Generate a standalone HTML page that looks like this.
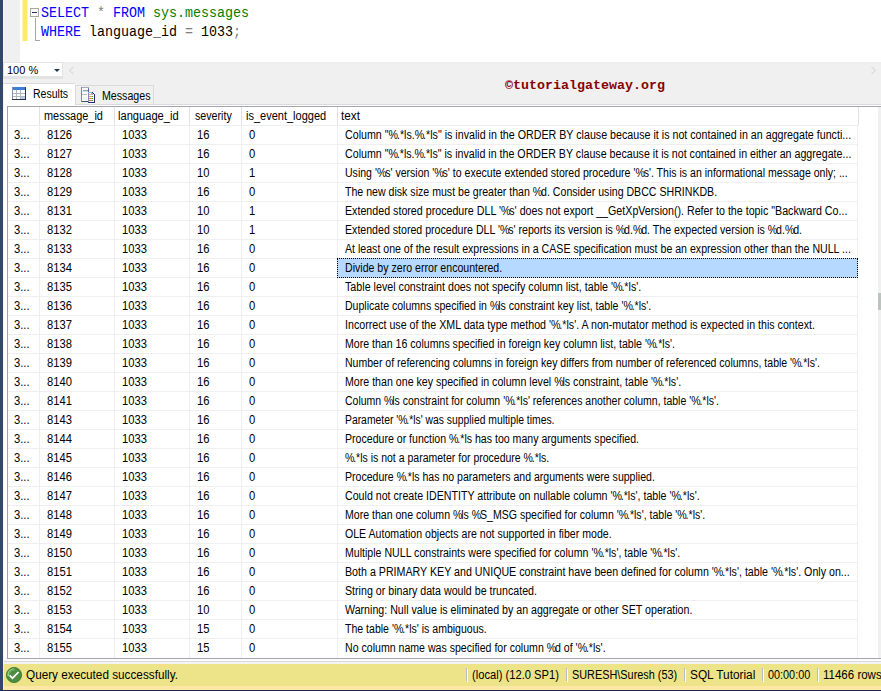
<!DOCTYPE html>
<html><head><meta charset="utf-8"><style>
html,body{margin:0;padding:0}
body{width:881px;height:691px;position:relative;overflow:hidden;background:#fff;font-family:"Liberation Sans",sans-serif}
div{position:absolute;box-sizing:border-box}
.t{white-space:pre;line-height:1;transform-origin:0 100%}
.b{line-height:0}
.p{letter-spacing:-1.3px}
</style></head><body>

<div style="left:3px;top:0;width:1px;height:62px;background:#f7f7f7"></div>
<div style="left:4px;top:0;width:16px;height:62px;background:#f0f0f0"></div>
<div style="left:22px;top:0;width:6px;height:41px;background:#fff4b0"></div>
<div style="left:23px;top:0;width:4px;height:41px;background:#ffea66"></div>
<div style="left:30px;top:8px;width:9px;height:9px;border:1px solid #a6a6a6"></div>
<div style="left:32px;top:12px;width:5px;height:1px;background:#29306a"></div>
<div style="left:35px;top:18px;width:1px;height:23px;background:#a6a6a6"></div>
<div style="left:35px;top:40px;width:5px;height:1px;background:#a6a6a6"></div>
<div class="t" style="left:41px;top:19.5px;font-family:'Liberation Mono',monospace;font-size:14px;transform:translateY(-100%) scaleX(0.9524)"><span style="color:#0000ff">SELECT</span><span style="color:#000"> </span><span style="color:#808080">*</span><span style="color:#000"> </span><span style="color:#0000ff">FROM</span><span style="color:#000"> </span><span style="color:#008000">sys.messages</span></div>
<div class="t" style="left:41px;top:38.5px;font-family:'Liberation Mono',monospace;font-size:14px;transform:translateY(-100%) scaleX(0.9524)"><span style="color:#0000ff">WHERE</span><span style="color:#000"> language_id </span><span style="color:#808080">=</span><span style="color:#000"> 1033</span><span style="color:#808080">;</span></div>
<div style="left:3px;top:62px;width:878px;height:42px;background:#f0f0f0"></div>
<div style="left:3px;top:62px;width:60px;height:17px;background:#e3e3e3"></div>
<div style="left:4px;top:63px;width:58px;height:13px;background:#fff"></div>
<div class="t" style="left:7px;top:76px;font-size:11px;color:#000;font-family:'Liberation Sans',sans-serif;font-weight:normal;transform:translateY(-100%) scaleX(1.0);">100 %</div>
<div style="left:54px;top:69px;width:0;height:0;border-left:3px solid transparent;border-right:3px solid transparent;border-top:3px solid #1f3a4c"></div>
<svg style="position:absolute;left:68px;top:66px" width="8" height="10"><polyline points="5.5,1 1.5,4.5 5.5,8" fill="none" stroke="#d0d0d0" stroke-width="1"/></svg>
<svg style="position:absolute;left:870px;top:66px" width="8" height="10"><polyline points="1.5,1 5.5,4.5 1.5,8" fill="none" stroke="#d0d0d0" stroke-width="1"/></svg>
<div class="t" style="left:505px;top:92px;font-size:13.33px;color:#8b0000;font-family:'Liberation Mono',sans-serif;font-weight:bold;transform:translateY(-100%) scaleX(1.0);">©tutorialgateway.org</div>
<div style="left:3px;top:83px;width:72px;height:22px;background:#fff;border-top:1px solid #dadada"></div>
<div style="left:75px;top:85px;width:79px;height:20px;background:#f0f0f0;border:1px solid #dadada;border-bottom:none"></div>
<div style="left:75px;top:104px;width:806px;height:1px;background:#dadada"></div>
<svg style="position:absolute;left:12px;top:87px" width="14" height="13" viewBox="0 0 14 13">
<rect x="0" y="0" width="14" height="13" fill="#fff"/>
<rect x="0" y="0" width="14" height="3" fill="#3a7fd5"/>
<rect x="0" y="0" width="1" height="13" fill="#8a8fa8"/>
<rect x="13" y="0" width="1" height="13" fill="#2a3550"/>
<rect x="0" y="12" width="14" height="1" fill="#2a3550"/>
<rect x="4" y="3" width="1" height="9" fill="#b0b8b8"/>
<rect x="8" y="3" width="1" height="9" fill="#b0b8b8"/>
<rect x="1" y="6" width="12" height="1" fill="#b0b8b8"/>
<rect x="1" y="9" width="12" height="1" fill="#b0b8b8"/>
<rect x="9" y="10" width="4" height="2" fill="#b8c8f0"/>
</svg>
<div class="t" style="left:33px;top:99.6px;font-size:12px;color:#000;font-family:'Liberation Sans',sans-serif;font-weight:normal;transform:translateY(-100%) scaleX(0.878);">Results</div>
<svg style="position:absolute;left:81px;top:87px" width="15" height="17" viewBox="0 0 15 17" shape-rendering="crispEdges">
<rect x="0" y="0" width="8" height="15" fill="#fafcff"/>
<rect x="0" y="0" width="8" height="1" fill="#a8a8b0"/>
<rect x="0" y="0" width="1" height="15" fill="#8c7cc8"/>
<rect x="7" y="1" width="1" height="5" fill="#7050a8"/>
<rect x="7" y="1" width="1" height="1" fill="#40a070"/>
<rect x="1" y="14" width="7" height="1" fill="#305868"/>
<rect x="2" y="3" width="5" height="1" fill="#9aa0a8"/>
<rect x="1" y="4" width="6" height="1" fill="#c0e8f0"/>
<rect x="1" y="7" width="5" height="1" fill="#b8c0c0"/>
<rect x="2" y="10" width="4" height="3" fill="#e8f4fa"/>
<rect x="7" y="5" width="7" height="12" fill="#ffffff"/>
<rect x="7" y="5" width="4" height="1" fill="#78d0c8"/>
<rect x="7" y="6" width="1" height="10" fill="#9080c0"/>
<rect x="11" y="5" width="1" height="1" fill="#283060"/>
<rect x="12" y="6" width="1" height="1" fill="#283060"/>
<rect x="13" y="7" width="1" height="9" fill="#283060"/>
<rect x="10" y="6" width="2" height="2" fill="#a0a8d0"/>
<rect x="7" y="15" width="7" height="1" fill="#283060"/>
<rect x="8" y="7" width="3" height="1" fill="#f8b060"/>
<rect x="8" y="9" width="3" height="1" fill="#f0a040"/>
<rect x="8" y="11" width="3" height="1" fill="#e88830"/>
<rect x="8" y="13" width="3" height="1" fill="#e07020"/>
<rect x="11" y="9" width="1" height="1" fill="#40a040"/>
<rect x="11" y="11" width="1" height="1" fill="#40a040"/>
<rect x="11" y="13" width="1" height="1" fill="#40a040"/>
</svg>
<div class="t" style="left:102px;top:102.3px;font-size:12px;color:#000;font-family:'Liberation Sans',sans-serif;font-weight:normal;transform:translateY(-100%) scaleX(0.887);">Messages</div>
<div style="left:7px;top:106px;width:880px;height:553px;border:1px solid #a2a5ad;background:#fff"></div>
<div style="left:878px;top:107px;width:3px;height:551px;background:#f0f0f0"></div>
<div style="left:878px;top:293px;width:3px;height:17px;background:#bcc4c0"></div>
<div style="left:39px;top:107px;width:1px;height:551px;background:#efefef"></div>
<div style="left:39px;top:107px;width:1px;height:18px;background:#e2e2e2"></div>
<div style="left:114px;top:107px;width:1px;height:551px;background:#efefef"></div>
<div style="left:114px;top:107px;width:1px;height:18px;background:#e2e2e2"></div>
<div style="left:189px;top:107px;width:1px;height:551px;background:#efefef"></div>
<div style="left:189px;top:107px;width:1px;height:18px;background:#e2e2e2"></div>
<div style="left:241px;top:107px;width:1px;height:551px;background:#efefef"></div>
<div style="left:241px;top:107px;width:1px;height:18px;background:#e2e2e2"></div>
<div style="left:337px;top:107px;width:1px;height:551px;background:#efefef"></div>
<div style="left:337px;top:107px;width:1px;height:18px;background:#e2e2e2"></div>
<div style="left:858px;top:107px;width:1px;height:18px;background:#e2e2e2"></div>
<div style="left:857px;top:126px;width:1px;height:532px;background:#efefef"></div>
<div style="left:8px;top:125px;width:851px;height:1px;background:#ededed"></div>
<div style="left:8px;top:144px;width:850px;height:1px;background:#efefef"></div>
<div style="left:8px;top:163px;width:850px;height:1px;background:#efefef"></div>
<div style="left:8px;top:182px;width:850px;height:1px;background:#efefef"></div>
<div style="left:8px;top:201px;width:850px;height:1px;background:#efefef"></div>
<div style="left:8px;top:220px;width:850px;height:1px;background:#efefef"></div>
<div style="left:8px;top:239px;width:850px;height:1px;background:#efefef"></div>
<div style="left:8px;top:258px;width:850px;height:1px;background:#efefef"></div>
<div style="left:8px;top:277px;width:850px;height:1px;background:#efefef"></div>
<div style="left:8px;top:296px;width:850px;height:1px;background:#efefef"></div>
<div style="left:8px;top:315px;width:850px;height:1px;background:#efefef"></div>
<div style="left:8px;top:334px;width:850px;height:1px;background:#efefef"></div>
<div style="left:8px;top:353px;width:850px;height:1px;background:#efefef"></div>
<div style="left:8px;top:372px;width:850px;height:1px;background:#efefef"></div>
<div style="left:8px;top:391px;width:850px;height:1px;background:#efefef"></div>
<div style="left:8px;top:410px;width:850px;height:1px;background:#efefef"></div>
<div style="left:8px;top:429px;width:850px;height:1px;background:#efefef"></div>
<div style="left:8px;top:448px;width:850px;height:1px;background:#efefef"></div>
<div style="left:8px;top:467px;width:850px;height:1px;background:#efefef"></div>
<div style="left:8px;top:486px;width:850px;height:1px;background:#efefef"></div>
<div style="left:8px;top:505px;width:850px;height:1px;background:#efefef"></div>
<div style="left:8px;top:524px;width:850px;height:1px;background:#efefef"></div>
<div style="left:8px;top:543px;width:850px;height:1px;background:#efefef"></div>
<div style="left:8px;top:562px;width:850px;height:1px;background:#efefef"></div>
<div style="left:8px;top:581px;width:850px;height:1px;background:#efefef"></div>
<div style="left:8px;top:600px;width:850px;height:1px;background:#efefef"></div>
<div style="left:8px;top:619px;width:850px;height:1px;background:#efefef"></div>
<div style="left:8px;top:638px;width:850px;height:1px;background:#efefef"></div>
<div style="left:337px;top:258px;width:521px;height:20px;background:#b6d9ff;border:1px dotted #000"></div>
<div class="t" style="left:44.0px;top:122px;font-size:12px;color:#000;font-family:'Liberation Sans',sans-serif;font-weight:normal;transform:translateY(-100%) scaleX(0.91);">message_id</div>
<div class="t" style="left:118.4px;top:122px;font-size:12px;color:#000;font-family:'Liberation Sans',sans-serif;font-weight:normal;transform:translateY(-100%) scaleX(0.927);">language_id</div>
<div class="t" style="left:194.7px;top:122px;font-size:12px;color:#000;font-family:'Liberation Sans',sans-serif;font-weight:normal;transform:translateY(-100%) scaleX(0.888);">severity</div>
<div class="t" style="left:245.7px;top:122px;font-size:12px;color:#000;font-family:'Liberation Sans',sans-serif;font-weight:normal;transform:translateY(-100%) scaleX(0.917);">is_event_logged</div>
<div class="t" style="left:341.3px;top:122px;font-size:12px;color:#000;font-family:'Liberation Sans',sans-serif;font-weight:normal;transform:translateY(-100%) scaleX(0.978);">text</div>
<div class="t" style="left:13.6px;top:141px;font-size:12px;color:#000;font-family:'Liberation Sans',sans-serif;font-weight:normal;transform:translateY(-100%) scaleX(0.935);">3...</div>
<div class="t" style="left:47px;top:141px;font-size:12px;color:#000;font-family:'Liberation Sans',sans-serif;font-weight:normal;transform:translateY(-100%) scaleX(0.935);">8126</div>
<div class="t" style="left:122px;top:141px;font-size:12px;color:#000;font-family:'Liberation Sans',sans-serif;font-weight:normal;transform:translateY(-100%) scaleX(0.935);">1033</div>
<div class="t" style="left:197px;top:141px;font-size:12px;color:#000;font-family:'Liberation Sans',sans-serif;font-weight:normal;transform:translateY(-100%) scaleX(0.935);">16</div>
<div class="t" style="left:249px;top:141px;font-size:12px;color:#000;font-family:'Liberation Sans',sans-serif;font-weight:normal;transform:translateY(-100%) scaleX(0.935);">0</div>
<div class="t" style="left:344.5px;top:141px;font-size:12px;color:#000;font-family:'Liberation Sans',sans-serif;font-weight:normal;transform:translateY(-100%) scaleX(0.8901);">Column "<span class="p">%</span>.*ls.<span class="p">%</span>.*ls" is invalid in the ORDER BY clause because it is not contained in an aggregate functi...</div>
<div class="t" style="left:13.6px;top:160px;font-size:12px;color:#000;font-family:'Liberation Sans',sans-serif;font-weight:normal;transform:translateY(-100%) scaleX(0.935);">3...</div>
<div class="t" style="left:47px;top:160px;font-size:12px;color:#000;font-family:'Liberation Sans',sans-serif;font-weight:normal;transform:translateY(-100%) scaleX(0.935);">8127</div>
<div class="t" style="left:122px;top:160px;font-size:12px;color:#000;font-family:'Liberation Sans',sans-serif;font-weight:normal;transform:translateY(-100%) scaleX(0.935);">1033</div>
<div class="t" style="left:197px;top:160px;font-size:12px;color:#000;font-family:'Liberation Sans',sans-serif;font-weight:normal;transform:translateY(-100%) scaleX(0.935);">16</div>
<div class="t" style="left:249px;top:160px;font-size:12px;color:#000;font-family:'Liberation Sans',sans-serif;font-weight:normal;transform:translateY(-100%) scaleX(0.935);">0</div>
<div class="t" style="left:344.5px;top:160px;font-size:12px;color:#000;font-family:'Liberation Sans',sans-serif;font-weight:normal;transform:translateY(-100%) scaleX(0.8883);">Column "<span class="p">%</span>.*ls.<span class="p">%</span>.*ls" is invalid in the ORDER BY clause because it is not contained in either an aggregate...</div>
<div class="t" style="left:13.6px;top:179px;font-size:12px;color:#000;font-family:'Liberation Sans',sans-serif;font-weight:normal;transform:translateY(-100%) scaleX(0.935);">3...</div>
<div class="t" style="left:47px;top:179px;font-size:12px;color:#000;font-family:'Liberation Sans',sans-serif;font-weight:normal;transform:translateY(-100%) scaleX(0.935);">8128</div>
<div class="t" style="left:122px;top:179px;font-size:12px;color:#000;font-family:'Liberation Sans',sans-serif;font-weight:normal;transform:translateY(-100%) scaleX(0.935);">1033</div>
<div class="t" style="left:197px;top:179px;font-size:12px;color:#000;font-family:'Liberation Sans',sans-serif;font-weight:normal;transform:translateY(-100%) scaleX(0.935);">10</div>
<div class="t" style="left:249px;top:179px;font-size:12px;color:#000;font-family:'Liberation Sans',sans-serif;font-weight:normal;transform:translateY(-100%) scaleX(0.935);">1</div>
<div class="t" style="left:344.5px;top:179px;font-size:12px;color:#000;font-family:'Liberation Sans',sans-serif;font-weight:normal;transform:translateY(-100%) scaleX(0.879);">Using '<span class="p">%</span>s' version '<span class="p">%</span>s' to execute extended stored procedure '<span class="p">%</span>s'. This is an informational message only; ...</div>
<div class="t" style="left:13.6px;top:198px;font-size:12px;color:#000;font-family:'Liberation Sans',sans-serif;font-weight:normal;transform:translateY(-100%) scaleX(0.935);">3...</div>
<div class="t" style="left:47px;top:198px;font-size:12px;color:#000;font-family:'Liberation Sans',sans-serif;font-weight:normal;transform:translateY(-100%) scaleX(0.935);">8129</div>
<div class="t" style="left:122px;top:198px;font-size:12px;color:#000;font-family:'Liberation Sans',sans-serif;font-weight:normal;transform:translateY(-100%) scaleX(0.935);">1033</div>
<div class="t" style="left:197px;top:198px;font-size:12px;color:#000;font-family:'Liberation Sans',sans-serif;font-weight:normal;transform:translateY(-100%) scaleX(0.935);">16</div>
<div class="t" style="left:249px;top:198px;font-size:12px;color:#000;font-family:'Liberation Sans',sans-serif;font-weight:normal;transform:translateY(-100%) scaleX(0.935);">0</div>
<div class="t" style="left:344.5px;top:198px;font-size:12px;color:#000;font-family:'Liberation Sans',sans-serif;font-weight:normal;transform:translateY(-100%) scaleX(0.8827);">The new disk size must be greater than <span class="p">%</span>d. Consider using DBCC SHRINKDB.</div>
<div class="t" style="left:13.6px;top:217px;font-size:12px;color:#000;font-family:'Liberation Sans',sans-serif;font-weight:normal;transform:translateY(-100%) scaleX(0.935);">3...</div>
<div class="t" style="left:47px;top:217px;font-size:12px;color:#000;font-family:'Liberation Sans',sans-serif;font-weight:normal;transform:translateY(-100%) scaleX(0.935);">8131</div>
<div class="t" style="left:122px;top:217px;font-size:12px;color:#000;font-family:'Liberation Sans',sans-serif;font-weight:normal;transform:translateY(-100%) scaleX(0.935);">1033</div>
<div class="t" style="left:197px;top:217px;font-size:12px;color:#000;font-family:'Liberation Sans',sans-serif;font-weight:normal;transform:translateY(-100%) scaleX(0.935);">10</div>
<div class="t" style="left:249px;top:217px;font-size:12px;color:#000;font-family:'Liberation Sans',sans-serif;font-weight:normal;transform:translateY(-100%) scaleX(0.935);">1</div>
<div class="t" style="left:344.5px;top:217px;font-size:12px;color:#000;font-family:'Liberation Sans',sans-serif;font-weight:normal;transform:translateY(-100%) scaleX(0.8896);">Extended stored procedure DLL '<span class="p">%</span>s' does not export __GetXpVersion(). Refer to the topic "Backward Co...</div>
<div class="t" style="left:13.6px;top:236px;font-size:12px;color:#000;font-family:'Liberation Sans',sans-serif;font-weight:normal;transform:translateY(-100%) scaleX(0.935);">3...</div>
<div class="t" style="left:47px;top:236px;font-size:12px;color:#000;font-family:'Liberation Sans',sans-serif;font-weight:normal;transform:translateY(-100%) scaleX(0.935);">8132</div>
<div class="t" style="left:122px;top:236px;font-size:12px;color:#000;font-family:'Liberation Sans',sans-serif;font-weight:normal;transform:translateY(-100%) scaleX(0.935);">1033</div>
<div class="t" style="left:197px;top:236px;font-size:12px;color:#000;font-family:'Liberation Sans',sans-serif;font-weight:normal;transform:translateY(-100%) scaleX(0.935);">10</div>
<div class="t" style="left:249px;top:236px;font-size:12px;color:#000;font-family:'Liberation Sans',sans-serif;font-weight:normal;transform:translateY(-100%) scaleX(0.935);">1</div>
<div class="t" style="left:344.5px;top:236px;font-size:12px;color:#000;font-family:'Liberation Sans',sans-serif;font-weight:normal;transform:translateY(-100%) scaleX(0.8839);">Extended stored procedure DLL '<span class="p">%</span>s' reports its version is <span class="p">%</span>d.<span class="p">%</span>d. The expected version is <span class="p">%</span>d.<span class="p">%</span>d.</div>
<div class="t" style="left:13.6px;top:255px;font-size:12px;color:#000;font-family:'Liberation Sans',sans-serif;font-weight:normal;transform:translateY(-100%) scaleX(0.935);">3...</div>
<div class="t" style="left:47px;top:255px;font-size:12px;color:#000;font-family:'Liberation Sans',sans-serif;font-weight:normal;transform:translateY(-100%) scaleX(0.935);">8133</div>
<div class="t" style="left:122px;top:255px;font-size:12px;color:#000;font-family:'Liberation Sans',sans-serif;font-weight:normal;transform:translateY(-100%) scaleX(0.935);">1033</div>
<div class="t" style="left:197px;top:255px;font-size:12px;color:#000;font-family:'Liberation Sans',sans-serif;font-weight:normal;transform:translateY(-100%) scaleX(0.935);">16</div>
<div class="t" style="left:249px;top:255px;font-size:12px;color:#000;font-family:'Liberation Sans',sans-serif;font-weight:normal;transform:translateY(-100%) scaleX(0.935);">0</div>
<div class="t" style="left:344.5px;top:255px;font-size:12px;color:#000;font-family:'Liberation Sans',sans-serif;font-weight:normal;transform:translateY(-100%) scaleX(0.8825);">At least one of the result expressions in a CASE specification must be an expression other than the NULL ...</div>
<div class="t" style="left:13.6px;top:274px;font-size:12px;color:#000;font-family:'Liberation Sans',sans-serif;font-weight:normal;transform:translateY(-100%) scaleX(0.935);">3...</div>
<div class="t" style="left:47px;top:274px;font-size:12px;color:#000;font-family:'Liberation Sans',sans-serif;font-weight:normal;transform:translateY(-100%) scaleX(0.935);">8134</div>
<div class="t" style="left:122px;top:274px;font-size:12px;color:#000;font-family:'Liberation Sans',sans-serif;font-weight:normal;transform:translateY(-100%) scaleX(0.935);">1033</div>
<div class="t" style="left:197px;top:274px;font-size:12px;color:#000;font-family:'Liberation Sans',sans-serif;font-weight:normal;transform:translateY(-100%) scaleX(0.935);">16</div>
<div class="t" style="left:249px;top:274px;font-size:12px;color:#000;font-family:'Liberation Sans',sans-serif;font-weight:normal;transform:translateY(-100%) scaleX(0.935);">0</div>
<div class="t" style="left:344.5px;top:274px;font-size:12px;color:#000;font-family:'Liberation Sans',sans-serif;font-weight:normal;transform:translateY(-100%) scaleX(0.8826);">Divide by zero error encountered.</div>
<div class="t" style="left:13.6px;top:293px;font-size:12px;color:#000;font-family:'Liberation Sans',sans-serif;font-weight:normal;transform:translateY(-100%) scaleX(0.935);">3...</div>
<div class="t" style="left:47px;top:293px;font-size:12px;color:#000;font-family:'Liberation Sans',sans-serif;font-weight:normal;transform:translateY(-100%) scaleX(0.935);">8135</div>
<div class="t" style="left:122px;top:293px;font-size:12px;color:#000;font-family:'Liberation Sans',sans-serif;font-weight:normal;transform:translateY(-100%) scaleX(0.935);">1033</div>
<div class="t" style="left:197px;top:293px;font-size:12px;color:#000;font-family:'Liberation Sans',sans-serif;font-weight:normal;transform:translateY(-100%) scaleX(0.935);">16</div>
<div class="t" style="left:249px;top:293px;font-size:12px;color:#000;font-family:'Liberation Sans',sans-serif;font-weight:normal;transform:translateY(-100%) scaleX(0.935);">0</div>
<div class="t" style="left:344.5px;top:293px;font-size:12px;color:#000;font-family:'Liberation Sans',sans-serif;font-weight:normal;transform:translateY(-100%) scaleX(0.8921);">Table level constraint does not specify column list, table '<span class="p">%</span>.*ls'.</div>
<div class="t" style="left:13.6px;top:312px;font-size:12px;color:#000;font-family:'Liberation Sans',sans-serif;font-weight:normal;transform:translateY(-100%) scaleX(0.935);">3...</div>
<div class="t" style="left:47px;top:312px;font-size:12px;color:#000;font-family:'Liberation Sans',sans-serif;font-weight:normal;transform:translateY(-100%) scaleX(0.935);">8136</div>
<div class="t" style="left:122px;top:312px;font-size:12px;color:#000;font-family:'Liberation Sans',sans-serif;font-weight:normal;transform:translateY(-100%) scaleX(0.935);">1033</div>
<div class="t" style="left:197px;top:312px;font-size:12px;color:#000;font-family:'Liberation Sans',sans-serif;font-weight:normal;transform:translateY(-100%) scaleX(0.935);">16</div>
<div class="t" style="left:249px;top:312px;font-size:12px;color:#000;font-family:'Liberation Sans',sans-serif;font-weight:normal;transform:translateY(-100%) scaleX(0.935);">0</div>
<div class="t" style="left:344.5px;top:312px;font-size:12px;color:#000;font-family:'Liberation Sans',sans-serif;font-weight:normal;transform:translateY(-100%) scaleX(0.8797);">Duplicate columns specified in <span class="p">%</span>ls constraint key list, table '<span class="p">%</span>.*ls'.</div>
<div class="t" style="left:13.6px;top:331px;font-size:12px;color:#000;font-family:'Liberation Sans',sans-serif;font-weight:normal;transform:translateY(-100%) scaleX(0.935);">3...</div>
<div class="t" style="left:47px;top:331px;font-size:12px;color:#000;font-family:'Liberation Sans',sans-serif;font-weight:normal;transform:translateY(-100%) scaleX(0.935);">8137</div>
<div class="t" style="left:122px;top:331px;font-size:12px;color:#000;font-family:'Liberation Sans',sans-serif;font-weight:normal;transform:translateY(-100%) scaleX(0.935);">1033</div>
<div class="t" style="left:197px;top:331px;font-size:12px;color:#000;font-family:'Liberation Sans',sans-serif;font-weight:normal;transform:translateY(-100%) scaleX(0.935);">16</div>
<div class="t" style="left:249px;top:331px;font-size:12px;color:#000;font-family:'Liberation Sans',sans-serif;font-weight:normal;transform:translateY(-100%) scaleX(0.935);">0</div>
<div class="t" style="left:344.5px;top:331px;font-size:12px;color:#000;font-family:'Liberation Sans',sans-serif;font-weight:normal;transform:translateY(-100%) scaleX(0.8881);">Incorrect use of the XML data type method '<span class="p">%</span>.*ls'. A non-mutator method is expected in this context.</div>
<div class="t" style="left:13.6px;top:350px;font-size:12px;color:#000;font-family:'Liberation Sans',sans-serif;font-weight:normal;transform:translateY(-100%) scaleX(0.935);">3...</div>
<div class="t" style="left:47px;top:350px;font-size:12px;color:#000;font-family:'Liberation Sans',sans-serif;font-weight:normal;transform:translateY(-100%) scaleX(0.935);">8138</div>
<div class="t" style="left:122px;top:350px;font-size:12px;color:#000;font-family:'Liberation Sans',sans-serif;font-weight:normal;transform:translateY(-100%) scaleX(0.935);">1033</div>
<div class="t" style="left:197px;top:350px;font-size:12px;color:#000;font-family:'Liberation Sans',sans-serif;font-weight:normal;transform:translateY(-100%) scaleX(0.935);">16</div>
<div class="t" style="left:249px;top:350px;font-size:12px;color:#000;font-family:'Liberation Sans',sans-serif;font-weight:normal;transform:translateY(-100%) scaleX(0.935);">0</div>
<div class="t" style="left:344.5px;top:350px;font-size:12px;color:#000;font-family:'Liberation Sans',sans-serif;font-weight:normal;transform:translateY(-100%) scaleX(0.8817);">More than 16 columns specified in foreign key column list, table '<span class="p">%</span>.*ls'.</div>
<div class="t" style="left:13.6px;top:369px;font-size:12px;color:#000;font-family:'Liberation Sans',sans-serif;font-weight:normal;transform:translateY(-100%) scaleX(0.935);">3...</div>
<div class="t" style="left:47px;top:369px;font-size:12px;color:#000;font-family:'Liberation Sans',sans-serif;font-weight:normal;transform:translateY(-100%) scaleX(0.935);">8139</div>
<div class="t" style="left:122px;top:369px;font-size:12px;color:#000;font-family:'Liberation Sans',sans-serif;font-weight:normal;transform:translateY(-100%) scaleX(0.935);">1033</div>
<div class="t" style="left:197px;top:369px;font-size:12px;color:#000;font-family:'Liberation Sans',sans-serif;font-weight:normal;transform:translateY(-100%) scaleX(0.935);">16</div>
<div class="t" style="left:249px;top:369px;font-size:12px;color:#000;font-family:'Liberation Sans',sans-serif;font-weight:normal;transform:translateY(-100%) scaleX(0.935);">0</div>
<div class="t" style="left:344.5px;top:369px;font-size:12px;color:#000;font-family:'Liberation Sans',sans-serif;font-weight:normal;transform:translateY(-100%) scaleX(0.8773);">Number of referencing columns in foreign key differs from number of referenced columns, table '<span class="p">%</span>.*ls'.</div>
<div class="t" style="left:13.6px;top:388px;font-size:12px;color:#000;font-family:'Liberation Sans',sans-serif;font-weight:normal;transform:translateY(-100%) scaleX(0.935);">3...</div>
<div class="t" style="left:47px;top:388px;font-size:12px;color:#000;font-family:'Liberation Sans',sans-serif;font-weight:normal;transform:translateY(-100%) scaleX(0.935);">8140</div>
<div class="t" style="left:122px;top:388px;font-size:12px;color:#000;font-family:'Liberation Sans',sans-serif;font-weight:normal;transform:translateY(-100%) scaleX(0.935);">1033</div>
<div class="t" style="left:197px;top:388px;font-size:12px;color:#000;font-family:'Liberation Sans',sans-serif;font-weight:normal;transform:translateY(-100%) scaleX(0.935);">16</div>
<div class="t" style="left:249px;top:388px;font-size:12px;color:#000;font-family:'Liberation Sans',sans-serif;font-weight:normal;transform:translateY(-100%) scaleX(0.935);">0</div>
<div class="t" style="left:344.5px;top:388px;font-size:12px;color:#000;font-family:'Liberation Sans',sans-serif;font-weight:normal;transform:translateY(-100%) scaleX(0.8857);">More than one key specified in column level <span class="p">%</span>ls constraint, table '<span class="p">%</span>.*ls'.</div>
<div class="t" style="left:13.6px;top:407px;font-size:12px;color:#000;font-family:'Liberation Sans',sans-serif;font-weight:normal;transform:translateY(-100%) scaleX(0.935);">3...</div>
<div class="t" style="left:47px;top:407px;font-size:12px;color:#000;font-family:'Liberation Sans',sans-serif;font-weight:normal;transform:translateY(-100%) scaleX(0.935);">8141</div>
<div class="t" style="left:122px;top:407px;font-size:12px;color:#000;font-family:'Liberation Sans',sans-serif;font-weight:normal;transform:translateY(-100%) scaleX(0.935);">1033</div>
<div class="t" style="left:197px;top:407px;font-size:12px;color:#000;font-family:'Liberation Sans',sans-serif;font-weight:normal;transform:translateY(-100%) scaleX(0.935);">16</div>
<div class="t" style="left:249px;top:407px;font-size:12px;color:#000;font-family:'Liberation Sans',sans-serif;font-weight:normal;transform:translateY(-100%) scaleX(0.935);">0</div>
<div class="t" style="left:344.5px;top:407px;font-size:12px;color:#000;font-family:'Liberation Sans',sans-serif;font-weight:normal;transform:translateY(-100%) scaleX(0.8747);">Column <span class="p">%</span>ls constraint for column '<span class="p">%</span>.*ls' references another column, table '<span class="p">%</span>.*ls'.</div>
<div class="t" style="left:13.6px;top:426px;font-size:12px;color:#000;font-family:'Liberation Sans',sans-serif;font-weight:normal;transform:translateY(-100%) scaleX(0.935);">3...</div>
<div class="t" style="left:47px;top:426px;font-size:12px;color:#000;font-family:'Liberation Sans',sans-serif;font-weight:normal;transform:translateY(-100%) scaleX(0.935);">8143</div>
<div class="t" style="left:122px;top:426px;font-size:12px;color:#000;font-family:'Liberation Sans',sans-serif;font-weight:normal;transform:translateY(-100%) scaleX(0.935);">1033</div>
<div class="t" style="left:197px;top:426px;font-size:12px;color:#000;font-family:'Liberation Sans',sans-serif;font-weight:normal;transform:translateY(-100%) scaleX(0.935);">16</div>
<div class="t" style="left:249px;top:426px;font-size:12px;color:#000;font-family:'Liberation Sans',sans-serif;font-weight:normal;transform:translateY(-100%) scaleX(0.935);">0</div>
<div class="t" style="left:344.5px;top:426px;font-size:12px;color:#000;font-family:'Liberation Sans',sans-serif;font-weight:normal;transform:translateY(-100%) scaleX(0.8631);">Parameter '<span class="p">%</span>.*ls' was supplied multiple times.</div>
<div class="t" style="left:13.6px;top:445px;font-size:12px;color:#000;font-family:'Liberation Sans',sans-serif;font-weight:normal;transform:translateY(-100%) scaleX(0.935);">3...</div>
<div class="t" style="left:47px;top:445px;font-size:12px;color:#000;font-family:'Liberation Sans',sans-serif;font-weight:normal;transform:translateY(-100%) scaleX(0.935);">8144</div>
<div class="t" style="left:122px;top:445px;font-size:12px;color:#000;font-family:'Liberation Sans',sans-serif;font-weight:normal;transform:translateY(-100%) scaleX(0.935);">1033</div>
<div class="t" style="left:197px;top:445px;font-size:12px;color:#000;font-family:'Liberation Sans',sans-serif;font-weight:normal;transform:translateY(-100%) scaleX(0.935);">16</div>
<div class="t" style="left:249px;top:445px;font-size:12px;color:#000;font-family:'Liberation Sans',sans-serif;font-weight:normal;transform:translateY(-100%) scaleX(0.935);">0</div>
<div class="t" style="left:344.5px;top:445px;font-size:12px;color:#000;font-family:'Liberation Sans',sans-serif;font-weight:normal;transform:translateY(-100%) scaleX(0.8815);">Procedure or function <span class="p">%</span>.*ls has too many arguments specified.</div>
<div class="t" style="left:13.6px;top:464px;font-size:12px;color:#000;font-family:'Liberation Sans',sans-serif;font-weight:normal;transform:translateY(-100%) scaleX(0.935);">3...</div>
<div class="t" style="left:47px;top:464px;font-size:12px;color:#000;font-family:'Liberation Sans',sans-serif;font-weight:normal;transform:translateY(-100%) scaleX(0.935);">8145</div>
<div class="t" style="left:122px;top:464px;font-size:12px;color:#000;font-family:'Liberation Sans',sans-serif;font-weight:normal;transform:translateY(-100%) scaleX(0.935);">1033</div>
<div class="t" style="left:197px;top:464px;font-size:12px;color:#000;font-family:'Liberation Sans',sans-serif;font-weight:normal;transform:translateY(-100%) scaleX(0.935);">16</div>
<div class="t" style="left:249px;top:464px;font-size:12px;color:#000;font-family:'Liberation Sans',sans-serif;font-weight:normal;transform:translateY(-100%) scaleX(0.935);">0</div>
<div class="t" style="left:344.5px;top:464px;font-size:12px;color:#000;font-family:'Liberation Sans',sans-serif;font-weight:normal;transform:translateY(-100%) scaleX(0.8748);"><span class="p">%</span>.*ls is not a parameter for procedure <span class="p">%</span>.*ls.</div>
<div class="t" style="left:13.6px;top:483px;font-size:12px;color:#000;font-family:'Liberation Sans',sans-serif;font-weight:normal;transform:translateY(-100%) scaleX(0.935);">3...</div>
<div class="t" style="left:47px;top:483px;font-size:12px;color:#000;font-family:'Liberation Sans',sans-serif;font-weight:normal;transform:translateY(-100%) scaleX(0.935);">8146</div>
<div class="t" style="left:122px;top:483px;font-size:12px;color:#000;font-family:'Liberation Sans',sans-serif;font-weight:normal;transform:translateY(-100%) scaleX(0.935);">1033</div>
<div class="t" style="left:197px;top:483px;font-size:12px;color:#000;font-family:'Liberation Sans',sans-serif;font-weight:normal;transform:translateY(-100%) scaleX(0.935);">16</div>
<div class="t" style="left:249px;top:483px;font-size:12px;color:#000;font-family:'Liberation Sans',sans-serif;font-weight:normal;transform:translateY(-100%) scaleX(0.935);">0</div>
<div class="t" style="left:344.5px;top:483px;font-size:12px;color:#000;font-family:'Liberation Sans',sans-serif;font-weight:normal;transform:translateY(-100%) scaleX(0.8797);">Procedure <span class="p">%</span>.*ls has no parameters and arguments were supplied.</div>
<div class="t" style="left:13.6px;top:502px;font-size:12px;color:#000;font-family:'Liberation Sans',sans-serif;font-weight:normal;transform:translateY(-100%) scaleX(0.935);">3...</div>
<div class="t" style="left:47px;top:502px;font-size:12px;color:#000;font-family:'Liberation Sans',sans-serif;font-weight:normal;transform:translateY(-100%) scaleX(0.935);">8147</div>
<div class="t" style="left:122px;top:502px;font-size:12px;color:#000;font-family:'Liberation Sans',sans-serif;font-weight:normal;transform:translateY(-100%) scaleX(0.935);">1033</div>
<div class="t" style="left:197px;top:502px;font-size:12px;color:#000;font-family:'Liberation Sans',sans-serif;font-weight:normal;transform:translateY(-100%) scaleX(0.935);">16</div>
<div class="t" style="left:249px;top:502px;font-size:12px;color:#000;font-family:'Liberation Sans',sans-serif;font-weight:normal;transform:translateY(-100%) scaleX(0.935);">0</div>
<div class="t" style="left:344.5px;top:502px;font-size:12px;color:#000;font-family:'Liberation Sans',sans-serif;font-weight:normal;transform:translateY(-100%) scaleX(0.8868);">Could not create IDENTITY attribute on nullable column '<span class="p">%</span>.*ls', table '<span class="p">%</span>.*ls'.</div>
<div class="t" style="left:13.6px;top:521px;font-size:12px;color:#000;font-family:'Liberation Sans',sans-serif;font-weight:normal;transform:translateY(-100%) scaleX(0.935);">3...</div>
<div class="t" style="left:47px;top:521px;font-size:12px;color:#000;font-family:'Liberation Sans',sans-serif;font-weight:normal;transform:translateY(-100%) scaleX(0.935);">8148</div>
<div class="t" style="left:122px;top:521px;font-size:12px;color:#000;font-family:'Liberation Sans',sans-serif;font-weight:normal;transform:translateY(-100%) scaleX(0.935);">1033</div>
<div class="t" style="left:197px;top:521px;font-size:12px;color:#000;font-family:'Liberation Sans',sans-serif;font-weight:normal;transform:translateY(-100%) scaleX(0.935);">16</div>
<div class="t" style="left:249px;top:521px;font-size:12px;color:#000;font-family:'Liberation Sans',sans-serif;font-weight:normal;transform:translateY(-100%) scaleX(0.935);">0</div>
<div class="t" style="left:344.5px;top:521px;font-size:12px;color:#000;font-family:'Liberation Sans',sans-serif;font-weight:normal;transform:translateY(-100%) scaleX(0.8796);">More than one column <span class="p">%</span>ls <span class="p">%</span>S_MSG specified for column '<span class="p">%</span>.*ls', table '<span class="p">%</span>.*ls'.</div>
<div class="t" style="left:13.6px;top:540px;font-size:12px;color:#000;font-family:'Liberation Sans',sans-serif;font-weight:normal;transform:translateY(-100%) scaleX(0.935);">3...</div>
<div class="t" style="left:47px;top:540px;font-size:12px;color:#000;font-family:'Liberation Sans',sans-serif;font-weight:normal;transform:translateY(-100%) scaleX(0.935);">8149</div>
<div class="t" style="left:122px;top:540px;font-size:12px;color:#000;font-family:'Liberation Sans',sans-serif;font-weight:normal;transform:translateY(-100%) scaleX(0.935);">1033</div>
<div class="t" style="left:197px;top:540px;font-size:12px;color:#000;font-family:'Liberation Sans',sans-serif;font-weight:normal;transform:translateY(-100%) scaleX(0.935);">16</div>
<div class="t" style="left:249px;top:540px;font-size:12px;color:#000;font-family:'Liberation Sans',sans-serif;font-weight:normal;transform:translateY(-100%) scaleX(0.935);">0</div>
<div class="t" style="left:344.5px;top:540px;font-size:12px;color:#000;font-family:'Liberation Sans',sans-serif;font-weight:normal;transform:translateY(-100%) scaleX(0.8823);">OLE Automation objects are not supported in fiber mode.</div>
<div class="t" style="left:13.6px;top:559px;font-size:12px;color:#000;font-family:'Liberation Sans',sans-serif;font-weight:normal;transform:translateY(-100%) scaleX(0.935);">3...</div>
<div class="t" style="left:47px;top:559px;font-size:12px;color:#000;font-family:'Liberation Sans',sans-serif;font-weight:normal;transform:translateY(-100%) scaleX(0.935);">8150</div>
<div class="t" style="left:122px;top:559px;font-size:12px;color:#000;font-family:'Liberation Sans',sans-serif;font-weight:normal;transform:translateY(-100%) scaleX(0.935);">1033</div>
<div class="t" style="left:197px;top:559px;font-size:12px;color:#000;font-family:'Liberation Sans',sans-serif;font-weight:normal;transform:translateY(-100%) scaleX(0.935);">16</div>
<div class="t" style="left:249px;top:559px;font-size:12px;color:#000;font-family:'Liberation Sans',sans-serif;font-weight:normal;transform:translateY(-100%) scaleX(0.935);">0</div>
<div class="t" style="left:344.5px;top:559px;font-size:12px;color:#000;font-family:'Liberation Sans',sans-serif;font-weight:normal;transform:translateY(-100%) scaleX(0.8831);">Multiple NULL constraints were specified for column '<span class="p">%</span>.*ls', table '<span class="p">%</span>.*ls'.</div>
<div class="t" style="left:13.6px;top:578px;font-size:12px;color:#000;font-family:'Liberation Sans',sans-serif;font-weight:normal;transform:translateY(-100%) scaleX(0.935);">3...</div>
<div class="t" style="left:47px;top:578px;font-size:12px;color:#000;font-family:'Liberation Sans',sans-serif;font-weight:normal;transform:translateY(-100%) scaleX(0.935);">8151</div>
<div class="t" style="left:122px;top:578px;font-size:12px;color:#000;font-family:'Liberation Sans',sans-serif;font-weight:normal;transform:translateY(-100%) scaleX(0.935);">1033</div>
<div class="t" style="left:197px;top:578px;font-size:12px;color:#000;font-family:'Liberation Sans',sans-serif;font-weight:normal;transform:translateY(-100%) scaleX(0.935);">16</div>
<div class="t" style="left:249px;top:578px;font-size:12px;color:#000;font-family:'Liberation Sans',sans-serif;font-weight:normal;transform:translateY(-100%) scaleX(0.935);">0</div>
<div class="t" style="left:344.5px;top:578px;font-size:12px;color:#000;font-family:'Liberation Sans',sans-serif;font-weight:normal;transform:translateY(-100%) scaleX(0.8883);">Both a PRIMARY KEY and UNIQUE constraint have been defined for column '<span class="p">%</span>.*ls', table '<span class="p">%</span>.*ls'. Only on...</div>
<div class="t" style="left:13.6px;top:597px;font-size:12px;color:#000;font-family:'Liberation Sans',sans-serif;font-weight:normal;transform:translateY(-100%) scaleX(0.935);">3...</div>
<div class="t" style="left:47px;top:597px;font-size:12px;color:#000;font-family:'Liberation Sans',sans-serif;font-weight:normal;transform:translateY(-100%) scaleX(0.935);">8152</div>
<div class="t" style="left:122px;top:597px;font-size:12px;color:#000;font-family:'Liberation Sans',sans-serif;font-weight:normal;transform:translateY(-100%) scaleX(0.935);">1033</div>
<div class="t" style="left:197px;top:597px;font-size:12px;color:#000;font-family:'Liberation Sans',sans-serif;font-weight:normal;transform:translateY(-100%) scaleX(0.935);">16</div>
<div class="t" style="left:249px;top:597px;font-size:12px;color:#000;font-family:'Liberation Sans',sans-serif;font-weight:normal;transform:translateY(-100%) scaleX(0.935);">0</div>
<div class="t" style="left:344.5px;top:597px;font-size:12px;color:#000;font-family:'Liberation Sans',sans-serif;font-weight:normal;transform:translateY(-100%) scaleX(0.8883);">String or binary data would be truncated.</div>
<div class="t" style="left:13.6px;top:616px;font-size:12px;color:#000;font-family:'Liberation Sans',sans-serif;font-weight:normal;transform:translateY(-100%) scaleX(0.935);">3...</div>
<div class="t" style="left:47px;top:616px;font-size:12px;color:#000;font-family:'Liberation Sans',sans-serif;font-weight:normal;transform:translateY(-100%) scaleX(0.935);">8153</div>
<div class="t" style="left:122px;top:616px;font-size:12px;color:#000;font-family:'Liberation Sans',sans-serif;font-weight:normal;transform:translateY(-100%) scaleX(0.935);">1033</div>
<div class="t" style="left:197px;top:616px;font-size:12px;color:#000;font-family:'Liberation Sans',sans-serif;font-weight:normal;transform:translateY(-100%) scaleX(0.935);">10</div>
<div class="t" style="left:249px;top:616px;font-size:12px;color:#000;font-family:'Liberation Sans',sans-serif;font-weight:normal;transform:translateY(-100%) scaleX(0.935);">0</div>
<div class="t" style="left:344.5px;top:616px;font-size:12px;color:#000;font-family:'Liberation Sans',sans-serif;font-weight:normal;transform:translateY(-100%) scaleX(0.8873);">Warning: Null value is eliminated by an aggregate or other SET operation.</div>
<div class="t" style="left:13.6px;top:635px;font-size:12px;color:#000;font-family:'Liberation Sans',sans-serif;font-weight:normal;transform:translateY(-100%) scaleX(0.935);">3...</div>
<div class="t" style="left:47px;top:635px;font-size:12px;color:#000;font-family:'Liberation Sans',sans-serif;font-weight:normal;transform:translateY(-100%) scaleX(0.935);">8154</div>
<div class="t" style="left:122px;top:635px;font-size:12px;color:#000;font-family:'Liberation Sans',sans-serif;font-weight:normal;transform:translateY(-100%) scaleX(0.935);">1033</div>
<div class="t" style="left:197px;top:635px;font-size:12px;color:#000;font-family:'Liberation Sans',sans-serif;font-weight:normal;transform:translateY(-100%) scaleX(0.935);">15</div>
<div class="t" style="left:249px;top:635px;font-size:12px;color:#000;font-family:'Liberation Sans',sans-serif;font-weight:normal;transform:translateY(-100%) scaleX(0.935);">0</div>
<div class="t" style="left:344.5px;top:635px;font-size:12px;color:#000;font-family:'Liberation Sans',sans-serif;font-weight:normal;transform:translateY(-100%) scaleX(0.8785);">The table '<span class="p">%</span>.*ls' is ambiguous.</div>
<div class="t" style="left:13.6px;top:654px;font-size:12px;color:#000;font-family:'Liberation Sans',sans-serif;font-weight:normal;transform:translateY(-100%) scaleX(0.935);">3...</div>
<div class="t" style="left:47px;top:654px;font-size:12px;color:#000;font-family:'Liberation Sans',sans-serif;font-weight:normal;transform:translateY(-100%) scaleX(0.935);">8155</div>
<div class="t" style="left:122px;top:654px;font-size:12px;color:#000;font-family:'Liberation Sans',sans-serif;font-weight:normal;transform:translateY(-100%) scaleX(0.935);">1033</div>
<div class="t" style="left:197px;top:654px;font-size:12px;color:#000;font-family:'Liberation Sans',sans-serif;font-weight:normal;transform:translateY(-100%) scaleX(0.935);">15</div>
<div class="t" style="left:249px;top:654px;font-size:12px;color:#000;font-family:'Liberation Sans',sans-serif;font-weight:normal;transform:translateY(-100%) scaleX(0.935);">0</div>
<div class="t" style="left:344.5px;top:654px;font-size:12px;color:#000;font-family:'Liberation Sans',sans-serif;font-weight:normal;transform:translateY(-100%) scaleX(0.8819);">No column name was specified for column <span class="p">%</span>d of '<span class="p">%</span>.*ls'.</div>
<div style="left:3px;top:659px;width:878px;height:2px;background:#fcfcfc"></div>
<div style="left:3px;top:661px;width:878px;height:1px;background:#d9d9d9"></div>
<div style="left:3px;top:662px;width:878px;height:2px;background:#f4f4f4"></div>
<div style="left:3px;top:664px;width:878px;height:22px;background:#ede48a"></div>
<div style="left:3px;top:686px;width:878px;height:4px;background:#fde6a6"></div>
<div style="left:3px;top:664px;width:1px;height:26px;background:#fbf1a8"></div>
<svg style="position:absolute;left:6px;top:667px" width="16" height="16" viewBox="0 0 16 16">
<circle cx="8" cy="8" r="7.6" fill="#4d8d3f" stroke="#347428" stroke-width="0.8"/>
<path d="M2.2 9 A6 6 0 0 1 8 2" fill="none" stroke="#a8dc98" stroke-width="1.6"/>
<path d="M3 7 A5 5 0 0 1 9 3" fill="none" stroke="#6aaa5a" stroke-width="1.5"/>
<polyline points="3.6,8.3 6.5,11.2 12.6,5" fill="none" stroke="#fff" stroke-width="1.7"/>
</svg>
<div class="t" style="left:26.0px;top:681px;font-size:12px;color:#000;font-family:'Liberation Sans',sans-serif;font-weight:normal;transform:translateY(-100%) scaleX(0.979);">Query executed successfully.</div>
<div class="t" style="left:472.1px;top:681px;font-size:12px;color:#000;font-family:'Liberation Sans',sans-serif;font-weight:normal;transform:translateY(-100%) scaleX(0.931);">(local) (12.0 SP1)</div>
<div class="t" style="left:571.7px;top:681px;font-size:12px;color:#000;font-family:'Liberation Sans',sans-serif;font-weight:normal;transform:translateY(-100%) scaleX(0.906);">SURESH\Suresh (53)</div>
<div class="t" style="left:689.5px;top:681px;font-size:12px;color:#000;font-family:'Liberation Sans',sans-serif;font-weight:normal;transform:translateY(-100%) scaleX(0.985);">SQL Tutorial</div>
<div class="t" style="left:767.9px;top:681px;font-size:12px;color:#000;font-family:'Liberation Sans',sans-serif;font-weight:normal;transform:translateY(-100%) scaleX(0.904);">00:00:00</div>
<div class="t" style="left:823.3px;top:681px;font-size:12px;color:#000;font-family:'Liberation Sans',sans-serif;font-weight:normal;transform:translateY(-100%) scaleX(0.96);">11466 rows</div>
<div style="left:466px;top:668px;width:1px;height:13px;background:#b4bccb"></div>
<div style="left:467px;top:669px;width:1px;height:13px;background:#fbfcff"></div>
<div style="left:566px;top:668px;width:1px;height:13px;background:#b4bccb"></div>
<div style="left:567px;top:669px;width:1px;height:13px;background:#fbfcff"></div>
<div style="left:684px;top:668px;width:1px;height:13px;background:#b4bccb"></div>
<div style="left:685px;top:669px;width:1px;height:13px;background:#fbfcff"></div>
<div style="left:762px;top:668px;width:1px;height:13px;background:#b4bccb"></div>
<div style="left:763px;top:669px;width:1px;height:13px;background:#fbfcff"></div>
<div style="left:817px;top:668px;width:1px;height:13px;background:#b4bccb"></div>
<div style="left:818px;top:669px;width:1px;height:13px;background:#fbfcff"></div>
<div style="left:3px;top:84px;width:1px;height:579px;background:#f5f5f0"></div>
<div style="left:0;top:0;width:3px;height:691px;background:#33476c"></div>
<div style="left:0;top:690px;width:881px;height:1px;background:#1d2a48"></div>
</body></html>
